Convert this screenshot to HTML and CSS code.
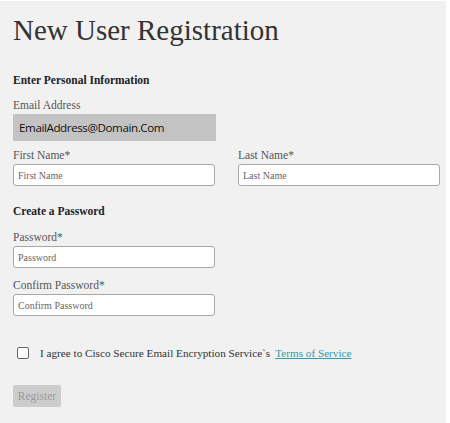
FILE: index.html
```html
<!DOCTYPE html>
<html lang="en">
<head>
<meta charset="utf-8">
<title>New User Registration</title>
<link rel="stylesheet" href="styles.css">
</head>
<body>
<div class="page">
  <h1 class="title">New User Registration</h1>
  <h2 class="section first-section">Enter Personal Information</h2>
  <div class="field email-field">
    <label class="label">Email Address</label>
    <div class="email-box">EmailAddress@Domain.Com</div>
  </div>
  <div class="name-row">
    <div class="field">
      <label class="label">First Name*</label>
      <input class="input" type="text" placeholder="First Name">
    </div>
    <div class="field">
      <label class="label">Last Name*</label>
      <input class="input" type="text" placeholder="Last Name">
    </div>
  </div>
  <h2 class="section pw-section">Create a Password</h2>
  <div class="field pw-field">
    <label class="label">Password*</label>
    <input class="input" type="password" placeholder="Password">
  </div>
  <div class="field confirm-field">
    <label class="label">Confirm Password*</label>
    <input class="input" type="password" placeholder="Confirm Password">
  </div>
  <div class="agree-row">
    <input class="check" type="checkbox">
    <span class="agree-text">I agree to Cisco Secure Email Encryption Service`s</span>
    <a class="tos" href="#">Terms of Service</a>
  </div>
  <button class="register" type="button" disabled>Register</button>
</div>
</body>
</html>
```
FILE: styles.css
```css
html, body {
  margin: 0;
  padding: 0;
  background: #ffffff;
}
body {
  font-family: "Liberation Serif", "Times New Roman", serif;
  color: #444;
}
.page {
  box-sizing: border-box;
  width: 446px;
  height: 422px;
  margin-top: 1px;
  background: #f1f1f1;
  padding: 0 7px 0 13px;
  display: flex;
  flex-direction: column;
  align-items: flex-start;
}
.title {
  margin: 12px 0 0 0;
  font-size: 29px;
  line-height: 34px;
  font-weight: normal;
  color: #333;
}
.section {
  margin: 0;
  font-size: 11.5px;
  line-height: 14px;
  font-weight: bold;
  color: #222;
}
.first-section { margin-top: 26px; }
.pw-section { margin-top: 18px; }
.field {
  display: flex;
  flex-direction: column;
  gap: 2px;
}
.label {
  font-size: 11.5px;
  line-height: 14px;
  color: #555;
}
.email-field { margin-top: 11px; }
.email-box {
  box-sizing: border-box;
  width: 203px;
  height: 27px;
  background: #c3c3c3;
  padding-left: 6px;
  font-family: "Open Sans", "Noto Sans", sans-serif;
  font-size: 11.6px;
  letter-spacing: -0.4px;
  line-height: 27px;
  color: #111;
}
.name-row {
  margin-top: 7px;
  display: grid;
  grid-template-columns: 202px 202px;
  column-gap: 23px;
}
.input {
  box-sizing: border-box;
  width: 202px;
  height: 22px;
  margin: 0;
  border: 1px solid #a8a8a8;
  border-radius: 3px;
  background: #fff;
  padding: 0 4px;
  font-family: "Liberation Serif", "Times New Roman", serif;
  font-size: 10px;
  color: #333;
}
.input::placeholder { color: #666; }
.pw-field { margin-top: 12px; }
.confirm-field { margin-top: 10px; }
.agree-row {
  margin-top: 30px;
  display: flex;
  align-items: center;
  height: 14px;
  font-size: 11.2px;
  color: #333;
}
.check {
  -webkit-appearance: none;
  appearance: none;
  box-sizing: border-box;
  width: 12px;
  height: 12px;
  margin: 0 11px 0 4px;
  border: 1px solid #666;
  border-radius: 2px;
  background: #fff;
}
.tos {
  margin-left: 5px;
  color: #2f9bab;
  text-decoration: underline;
}
.register {
  margin-top: 25px;
  width: 48px;
  height: 22px;
  border: none;
  border-radius: 2px;
  background: #cdcdcd;
  color: #9a9a9a;
  font-family: "Liberation Serif", "Times New Roman", serif;
  font-size: 11.5px;
  padding: 0;
}
```
